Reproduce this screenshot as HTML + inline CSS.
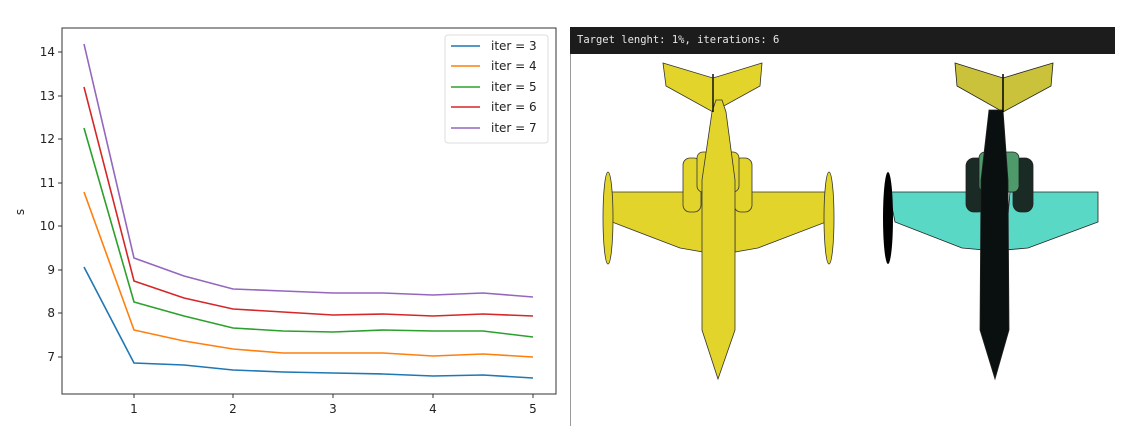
<!DOCTYPE html>
<html><head><meta charset="utf-8"><style>
html,body{margin:0;padding:0;background:#fff;width:1143px;height:436px;overflow:hidden}
svg text{font-family:"DejaVu Sans","Liberation Sans",sans-serif;fill:#222}
</style></head><body>
<svg width="1143" height="436" viewBox="0 0 1143 436" xmlns="http://www.w3.org/2000/svg">
<rect x="62" y="28" width="494" height="366" fill="none" stroke="#333" stroke-width="1"/>
<g stroke="#333" stroke-width="1">
<line x1="134" y1="394" x2="134" y2="398"/><line x1="233" y1="394" x2="233" y2="398"/><line x1="333" y1="394" x2="333" y2="398"/><line x1="433" y1="394" x2="433" y2="398"/><line x1="533" y1="394" x2="533" y2="398"/>
<line x1="58" y1="52" x2="62" y2="52"/><line x1="58" y1="96" x2="62" y2="96"/><line x1="58" y1="139" x2="62" y2="139"/><line x1="58" y1="183" x2="62" y2="183"/><line x1="58" y1="226" x2="62" y2="226"/><line x1="58" y1="270" x2="62" y2="270"/><line x1="58" y1="313" x2="62" y2="313"/><line x1="58" y1="357" x2="62" y2="357"/>
</g>
<g font-size="12" text-anchor="middle">
<text x="134" y="413">1</text><text x="233" y="413">2</text><text x="333" y="413">3</text><text x="433" y="413">4</text><text x="533" y="413">5</text>
</g>
<g font-size="12" text-anchor="end">
<text x="55" y="56">14</text><text x="55" y="100">13</text><text x="55" y="143">12</text><text x="55" y="187">11</text><text x="55" y="230">10</text><text x="55" y="274">9</text><text x="55" y="317">8</text><text x="55" y="361">7</text>
</g>
<text x="24" y="212" font-size="12" text-anchor="middle" transform="rotate(-90 24 212)">s</text>
<g fill="none" stroke-width="1.6">
<polyline stroke="#1f77b4" points="84,267 134,363 184,365 233,370 283,372 333,373 383,374 433,376 483,375 533,378"/>
<polyline stroke="#ff7f0e" points="84,192 134,330 184,341 233,349 283,353 333,353 383,353 433,356 483,354 533,357"/>
<polyline stroke="#2ca02c" points="84,128 134,302 184,316 233,328 283,331 333,332 383,330 433,331 483,331 533,337"/>
<polyline stroke="#d62728" points="84,87 134,281 184,298 233,309 283,312 333,315 383,314 433,316 483,314 533,316"/>
<polyline stroke="#9467bd" points="84,44 134,258 184,276 233,289 283,291 333,293 383,293 433,295 483,293 533,297"/>
</g>
<rect x="445" y="35" width="103" height="108" rx="3" fill="#fff" fill-opacity="0.9" stroke="#ddd"/>
<g stroke-width="1.6">
<line x1="451" y1="46" x2="480" y2="46" stroke="#1f77b4"/>
<line x1="451" y1="66" x2="480" y2="66" stroke="#ff7f0e"/>
<line x1="451" y1="87" x2="480" y2="87" stroke="#2ca02c"/>
<line x1="451" y1="107" x2="480" y2="107" stroke="#d62728"/>
<line x1="451" y1="128" x2="480" y2="128" stroke="#9467bd"/>
</g>
<g font-size="12">
<text x="491" y="50">iter = 3</text><text x="491" y="70">iter = 4</text><text x="491" y="91">iter = 5</text><text x="491" y="111">iter = 6</text><text x="491" y="132">iter = 7</text>
</g>
<line x1="570.5" y1="27" x2="570.5" y2="426" stroke="#999"/>
<rect x="570" y="27" width="545" height="27" fill="#1c1c1c"/>
<text x="577" y="43" font-size="10.5" style="font-family:'DejaVu Sans Mono','Liberation Mono',monospace;fill:#e8e8e8">Target lenght: 1%, iterations: 6</text>
<g stroke="#333" stroke-width="0.8" fill="#e2d42a">
<polygon points="663,63 713,78 713,112 666,86"/>
<polygon points="762,63 713,78 713,112 760,86"/>
<polygon points="606,192 703,192 703,252 680,248 612,222"/>
<polygon points="832,192 735,192 735,252 758,248 826,222"/>
<ellipse cx="608" cy="218" rx="5" ry="46"/>
<ellipse cx="829" cy="218" rx="5" ry="46"/>
<rect x="683" y="158" width="18" height="54" rx="7"/>
<rect x="734" y="158" width="18" height="54" rx="7"/>
<rect x="697" y="152" width="42" height="40" rx="6"/>
<path d="M712,112 L716,100 L722,100 L726,112 L735,180 L735,330 L718,379 L702,330 L702,180 Z"/>
</g>
<line x1="713" y1="74" x2="713" y2="112" stroke="#111" stroke-width="1.5"/>
<g stroke="#222" stroke-width="0.8">
<polygon points="955,63 1003,78 1003,112 957,86" fill="#c9c23a"/>
<polygon points="1053,63 1003,78 1003,112 1051,86" fill="#c9c23a"/>
<polygon points="889,192 980,192 985,250 962,248 895,222" fill="#5ad8c6"/>
<polygon points="1098,192 1010,192 1005,250 1028,248 1098,222" fill="#5ad8c6"/>
<rect x="966" y="158" width="20" height="54" rx="8" fill="#1a2a25"/>
<rect x="1013" y="158" width="20" height="54" rx="8" fill="#1a2a25"/>
<rect x="979" y="152" width="40" height="40" rx="6" fill="#4f9a6a"/>
<path d="M989,110 L1003,110 L1008,180 L1009,330 L995,379 L980,330 L981,180 Z" fill="#0a0f10"/>
</g>
<ellipse cx="888" cy="218" rx="5" ry="46" fill="#000"/>
<line x1="1003" y1="74" x2="1003" y2="112" stroke="#000" stroke-width="1.5"/>
</svg>
</body></html>
